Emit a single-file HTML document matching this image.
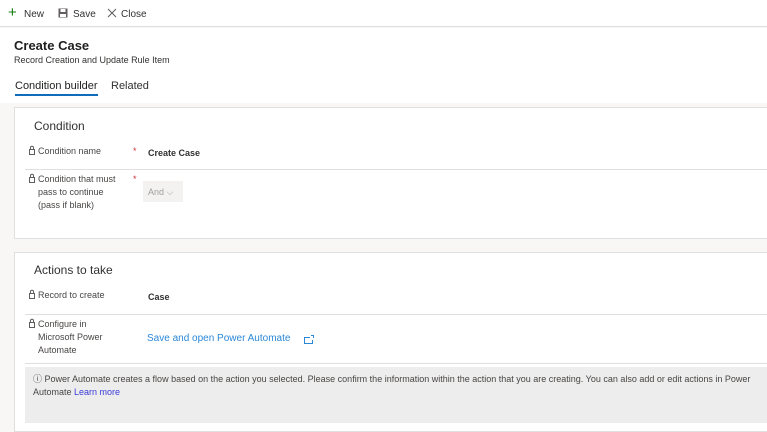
<!DOCTYPE html>
<html><head><style>
*{margin:0;padding:0;box-sizing:border-box}
body{width:767px;height:427px;overflow:hidden;font-family:"Liberation Sans",sans-serif;background:#f8f7f6;position:relative;color:#323130}
.abs{position:absolute}
.tb{left:0;top:0;width:767px;height:27px;background:#fff;border-bottom:1px solid #e1dfdd;font-size:10px;color:#323130}
.hdr{left:0;top:28px;width:767px;height:75px;background:#fff}
.card{left:14px;width:760px;background:#fff;border:1px solid #e1dfdd}
.lbl{font-size:9px;color:#484644;line-height:13px}
.lock{display:inline-block;vertical-align:-1px;margin-right:2px}
.req{color:#d13438;font-size:9px}
.val{font-size:9px;font-weight:bold;color:#323130}
.sep{height:1px;background:#e1dfdd}
</style></head><body>
<div class="abs tb">
 <span class="abs" style="left:8px;top:5px;font-size:15px;color:#107c10;line-height:15px">+</span>
 <span class="abs" style="left:24px;top:9px">New</span>
 <svg class="abs" style="left:58px;top:8px" width="10" height="10" viewBox="0 0 10 10"><rect x="0.5" y="0.5" width="9" height="9" fill="#605e5c"/><rect x="2.5" y="1" width="5" height="3" fill="#fff"/><rect x="2" y="6" width="6" height="3" fill="#fff"/></svg>
 <span class="abs" style="left:73px;top:9px">Save</span>
 <svg class="abs" style="left:107px;top:8px" width="10" height="10"><path d="M1 1L9 9M9 1L1 9" stroke="#605e5c" stroke-width="1"/></svg>
 <span class="abs" style="left:121px;top:9px">Close</span>
</div>
<div class="abs hdr">
 <div class="abs" style="left:14px;top:10px;font-size:13px;font-weight:bold;color:#201f1e">Create Case</div>
 <div class="abs" style="left:14px;top:27px;font-size:9px;color:#323130">Record Creation and Update Rule Item</div>
 <div class="abs" style="left:15px;top:52px;font-size:11px;color:#201f1e">Condition builder</div>
 <div class="abs" style="left:15px;top:66px;width:83px;height:2px;background:#0f6cbd"></div>
 <div class="abs" style="left:111px;top:52px;font-size:11px;color:#323130">Related</div>
</div>
<div class="abs card" style="top:107px;height:132px">
 <div class="abs" style="left:19px;top:11px;font-size:12px;color:#323130">Condition</div>
 <div class="abs lbl" style="left:13px;top:37px"><svg class="lock" width="8" height="10"><path d="M1.5 4.5H6.5V9.5H1.5ZM2.5 4.5V2.8A1.5 1.5 0 0 1 5.5 2.8V4.5" stroke="#605e5c" fill="none"/></svg>Condition name</div>
 <div class="abs req" style="left:118px;top:38px">*</div>
 <div class="abs val" style="left:133px;top:40px">Create Case</div>
 <div class="abs sep" style="left:10px;top:61px;width:760px"></div>
 <div class="abs lbl" style="left:13px;top:65px;width:110px"><svg class="lock" width="8" height="10"><path d="M1.5 4.5H6.5V9.5H1.5ZM2.5 4.5V2.8A1.5 1.5 0 0 1 5.5 2.8V4.5" stroke="#605e5c" fill="none"/></svg>Condition that must<br>&nbsp;&nbsp;&nbsp;&nbsp;pass to continue<br>&nbsp;&nbsp;&nbsp;&nbsp;(pass if blank)</div>
 <div class="abs req" style="left:118px;top:66px">*</div>
 <div class="abs" style="left:128px;top:73px;width:40px;height:21px;background:#f3f2f1;font-size:9px;color:#a19f9d;padding:6px 5px">And ⌵</div>
</div>
<div class="abs card" style="top:252px;height:180px">
 <div class="abs" style="left:19px;top:10px;font-size:12px;color:#323130">Actions to take</div>
 <div class="abs lbl" style="left:13px;top:36px"><svg class="lock" width="8" height="10"><path d="M1.5 4.5H6.5V9.5H1.5ZM2.5 4.5V2.8A1.5 1.5 0 0 1 5.5 2.8V4.5" stroke="#605e5c" fill="none"/></svg>Record to create</div>
 <div class="abs val" style="left:133px;top:39px">Case</div>
 <div class="abs sep" style="left:10px;top:61px;width:760px"></div>
 <div class="abs lbl" style="left:13px;top:65px"><svg class="lock" width="8" height="10"><path d="M1.5 4.5H6.5V9.5H1.5ZM2.5 4.5V2.8A1.5 1.5 0 0 1 5.5 2.8V4.5" stroke="#605e5c" fill="none"/></svg>Configure in<br>&nbsp;&nbsp;&nbsp;&nbsp;Microsoft Power<br>&nbsp;&nbsp;&nbsp;&nbsp;Automate</div>
 <div class="abs" style="left:132px;top:80px;font-size:10px;color:#2b88d8">Save and open Power Automate</div>
 <svg class="abs" style="left:289px;top:82px" width="10" height="9"><path d="M6 2.5H0.5V8.5H8.5V5M7 0.5H9.5V3" stroke="#2b88d8" fill="none" stroke-width="1"/></svg>
 <div class="abs sep" style="left:10px;top:110px;width:760px"></div>
 <div class="abs" style="left:10px;top:114px;width:760px;height:56px;background:#ededed;font-size:9px;color:#484644;line-height:13px;padding:6px 8px">ⓘ Power Automate creates a flow based on the action you selected. Please confirm the information within the action that you are creating. You can also add or edit actions in Power Automate <span style="color:#3a3ad8">Learn more</span></div>
</div>
</body></html>
